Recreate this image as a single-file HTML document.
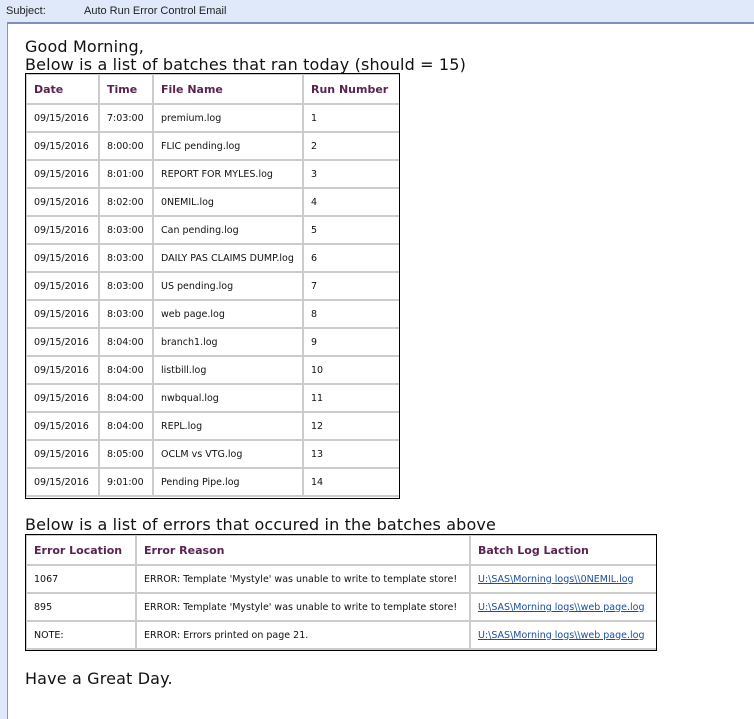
<!DOCTYPE html>
<html><head><style>
body{margin:0;width:754px;height:719px;background:#dfe9fa;font-family:"DejaVu Sans","Liberation Sans",sans-serif;overflow:hidden;position:relative}
.subj{position:absolute;top:5px;font-size:11px;color:#222;font-family:"Liberation Sans",sans-serif}
.panel{position:absolute;left:7px;top:22px;right:0;bottom:0;background:#fff;border-left:1px solid #7f97c0;border-top:2px solid #7f90b8}
.t{position:absolute;font-size:16px;color:#111;white-space:nowrap;letter-spacing:0.15px}
.w{position:absolute;border:1px solid #000;overflow:hidden}
table{border-collapse:collapse;font-size:9.5px;color:#111;table-layout:fixed;margin:-1px}
td,th{border:2px solid #ccc;padding:0 0 0 7px;text-align:left;white-space:nowrap;overflow:hidden}
th{color:#5a2350;font-size:11px;font-weight:bold}
a{color:#1a4fa0;text-decoration:underline}
</style></head><body>
<div class="subj" style="left:6px">Subject:</div>
<div class="subj" style="left:84px">Auto Run Error Control Email</div>
<div class="panel"></div>
<div class="t" style="left:25px;top:37px">Good Morning,</div>
<div class="t" style="left:25px;top:55px">Below is a list of batches that ran today (should = 15)</div>
<div class="w" style="left:25px;top:73px;width:373px;height:424px">
<table style="width:377px">
<colgroup><col style="width:73px"><col style="width:54px"><col style="width:150px"><col></colgroup>
<tr style="height:30px"><th>Date</th><th>Time</th><th>File Name</th><th>Run Number</th></tr>
<tr style="height:28px"><td>09/15/2016</td><td>7:03:00</td><td>premium.log</td><td>1</td></tr>
<tr style="height:28px"><td>09/15/2016</td><td>8:00:00</td><td>FLIC pending.log</td><td>2</td></tr>
<tr style="height:28px"><td>09/15/2016</td><td>8:01:00</td><td>REPORT FOR MYLES.log</td><td>3</td></tr>
<tr style="height:28px"><td>09/15/2016</td><td>8:02:00</td><td>0NEMIL.log</td><td>4</td></tr>
<tr style="height:28px"><td>09/15/2016</td><td>8:03:00</td><td>Can pending.log</td><td>5</td></tr>
<tr style="height:28px"><td>09/15/2016</td><td>8:03:00</td><td>DAILY PAS CLAIMS DUMP.log</td><td>6</td></tr>
<tr style="height:28px"><td>09/15/2016</td><td>8:03:00</td><td>US pending.log</td><td>7</td></tr>
<tr style="height:28px"><td>09/15/2016</td><td>8:03:00</td><td>web page.log</td><td>8</td></tr>
<tr style="height:28px"><td>09/15/2016</td><td>8:04:00</td><td>branch1.log</td><td>9</td></tr>
<tr style="height:28px"><td>09/15/2016</td><td>8:04:00</td><td>listbill.log</td><td>10</td></tr>
<tr style="height:28px"><td>09/15/2016</td><td>8:04:00</td><td>nwbqual.log</td><td>11</td></tr>
<tr style="height:28px"><td>09/15/2016</td><td>8:04:00</td><td>REPL.log</td><td>12</td></tr>
<tr style="height:28px"><td>09/15/2016</td><td>8:05:00</td><td>OCLM vs VTG.log</td><td>13</td></tr>
<tr style="height:28px"><td>09/15/2016</td><td>9:01:00</td><td>Pending Pipe.log</td><td>14</td></tr>
</table></div>
<div class="t" style="left:25px;top:515px">Below is a list of errors that occured in the batches above</div>
<div class="w" style="left:25px;top:534px;width:630px;height:115px">
<table style="width:634px">
<colgroup><col style="width:110px"><col style="width:334px"><col></colgroup>
<tr style="height:30px"><th>Error Location</th><th>Error Reason</th><th>Batch Log Laction</th></tr>
<tr style="height:28px"><td>1067</td><td>ERROR: Template 'Mystyle' was unable to write to template store!</td><td><a>U:\SAS\Morning logs\\0NEMIL.log</a></td></tr>
<tr style="height:28px"><td>895</td><td>ERROR: Template 'Mystyle' was unable to write to template store!</td><td><a>U:\SAS\Morning logs\\web page.log</a></td></tr>
<tr style="height:28px"><td>NOTE:</td><td>ERROR: Errors printed on page 21.</td><td><a>U:\SAS\Morning logs\\web page.log</a></td></tr>
</table></div>
<div class="t" style="left:25px;top:669px">Have a Great Day.</div>
</body></html>
